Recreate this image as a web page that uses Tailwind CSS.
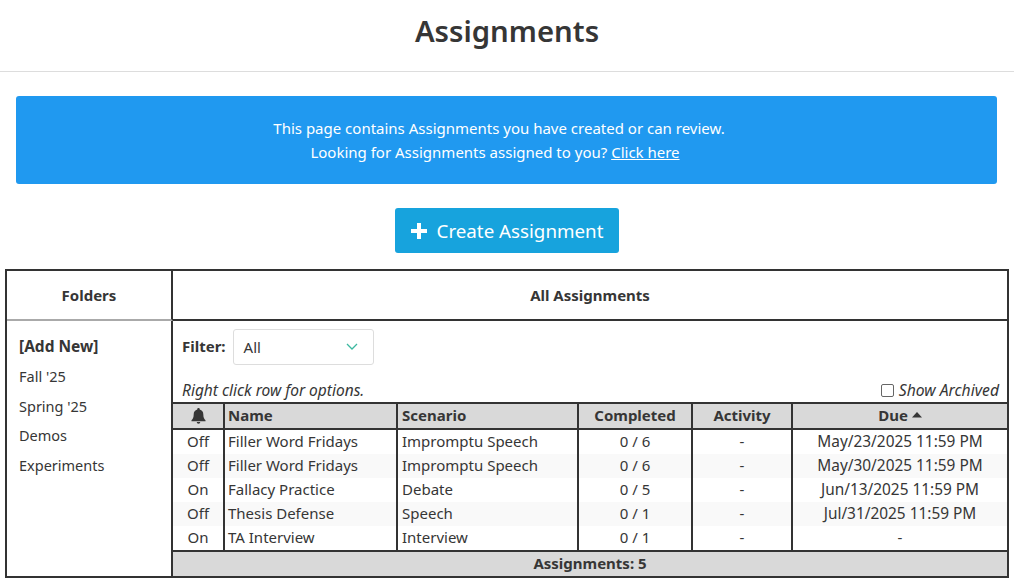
<!DOCTYPE html>
<html><head><script src="https://cdn.jsdelivr.net/npm/@tailwindcss/browser@4"></script></head>
<body class="bg-white text-[#363636] font-['Noto_Sans','Open_Sans',sans-serif] overflow-hidden">
<div class="w-[1014px] h-[582px] overflow-hidden">
<header class="h-[72px] border-b border-[#dddddd] flex items-center justify-center pb-[8px]"><h1 class="text-[29.3px] font-semibold leading-none">Assignments</h1></header>
<div class="ml-4 mt-6 w-[981px] h-[88px] bg-[#2099f0] rounded-[3px] text-white text-[15px] leading-6 flex flex-col items-center justify-center pr-[15px]">
<p>This page contains Assignments you have created or can review.</p>
<p class="pr-[8px]">Looking for Assignments assigned to you? <span class="underline">Click here</span></p>
</div>
<div class="flex justify-center mt-6"><button class="h-[45px] w-[224px] bg-[#17a3dd] rounded-[3px] text-white text-[18.75px] flex items-center justify-center gap-[10px] pt-[1px]">
<svg class="-mt-[1px]" width="16" height="16" viewBox="0 0 16 16"><path d="M6 0h4v6h6v4h-6v6H6v-6H0V6h6z" fill="#fff"/></svg>Create Assignment</button></div>
<div class="ml-[5px] mt-4 w-[1004px] h-[309px] border-2 border-[#333] grid grid-cols-[166px_1fr] grid-rows-[50px_1fr]">
<div class="border-r-2 border-b-2 border-r-[#333] border-b-[#aaa] flex items-center justify-center font-bold text-[15px] pt-[1px]">Folders</div>
<div class="border-b-2 border-[#333] flex items-center justify-center font-bold text-[15px] pt-[1px]">All Assignments</div>
<div class="border-r-2 border-[#333] px-[12px] pt-[11px] text-[14.5px] leading-[29.8px]"><p class="font-bold text-[15.5px]">[Add New]</p><p>Fall '25</p><p>Spring '25</p><p>Demos</p><p>Experiments</p></div>
<div class="flex flex-col text-[15px] leading-[24px]">
<div class="flex items-center h-[52px] px-[9px] gap-[7px]"><b class="mb-[2px]">Filter:</b><div class="w-[141px] h-[36px] border border-[#ddd] rounded-[3px] flex items-center justify-between pl-[10px] pr-[15px]"><span>All</span><svg width="12" height="8" viewBox="0 0 12 8"><path d="M1 1l5 5 5-5" fill="none" stroke="#3cb8a0" stroke-width="1.3"/></svg></div></div>
<div class="flex justify-between italic text-[15.5px] h-[29px] items-center pl-[9px] pr-[8px] pt-[5px]"><span>Right click row for options.</span><label class="flex items-center gap-[5px] text-[15.7px]"><span class="inline-block w-[13px] h-[13px] border border-[#666] rounded-[2px]"></span>Show Archived</label></div>
<table class="w-[834px] table-fixed border-collapse text-center leading-[22px]">
<colgroup><col class="w-[51px]"><col class="w-[173px]"><col class="w-[181px]"><col class="w-[114px]"><col class="w-[100px]"><col></colgroup>
<thead class="bg-[#d9d9d9] font-bold [&_th]:pb-[2px]"><tr class="h-[26px] border-y-2 border-[#333]">
<th class="border-r-2 border-[#333]"><svg class="inline-block align-[-3px]" width="15" height="16" viewBox="0 0 15 16"><path d="M7.500 0a1.200 1.200 0 0 1 1.200 1.400C11 2 12.300 3.800 12.300 6.200c0 3.300.9 4.800 2.200 6v1H.5v-1c1.300-1.200 2.200-2.700 2.200-6C2.700 3.800 4 2 6.300 1.400A1.200 1.200 0 0 1 7.500 0zM5.700 14h3.600a1.800 1.800 0 0 1-3.600 0z" fill="#363636"/></svg></th>
<th class="border-r-2 border-[#333] text-left pl-[3px]">Name</th>
<th class="border-r-2 border-[#333] text-left pl-[4px]">Scenario</th>
<th class="border-r-2 border-[#333]">Completed</th>
<th class="border-r-2 border-[#333]">Activity</th>
<th>Due <svg class="inline-block align-[3px]" width="10" height="6" viewBox="0 0 10 6"><path d="M5 0l5 5.500H0z" fill="#363636"/></svg></th>
</tr></thead>
<tbody class="leading-[23px] [&_td]:pb-[1px]">
<tr class="h-[24px]"><td class="border-r-2 border-[#333]">Off</td><td class="border-r-2 border-[#333] text-left pl-[3px]">Filler Word Fridays</td><td class="border-r-2 border-[#333] text-left pl-[4px]">Impromptu Speech</td><td class="border-r-2 border-[#333]">0 / 6</td><td class="border-r-2 border-[#333]">-</td><td class="text-[15.4px]">May/23/2025 11:59 PM</td></tr>
<tr class="h-[24px] bg-[#f9f9f9]"><td class="border-r-2 border-[#333]">Off</td><td class="border-r-2 border-[#333] text-left pl-[3px]">Filler Word Fridays</td><td class="border-r-2 border-[#333] text-left pl-[4px]">Impromptu Speech</td><td class="border-r-2 border-[#333]">0 / 6</td><td class="border-r-2 border-[#333]">-</td><td class="text-[15.4px]">May/30/2025 11:59 PM</td></tr>
<tr class="h-[24px]"><td class="border-r-2 border-[#333]">On</td><td class="border-r-2 border-[#333] text-left pl-[3px]">Fallacy Practice</td><td class="border-r-2 border-[#333] text-left pl-[4px]">Debate</td><td class="border-r-2 border-[#333]">0 / 5</td><td class="border-r-2 border-[#333]">-</td><td class="text-[15.4px]">Jun/13/2025 11:59 PM</td></tr>
<tr class="h-[24px] bg-[#f9f9f9]"><td class="border-r-2 border-[#333]">Off</td><td class="border-r-2 border-[#333] text-left pl-[3px]">Thesis Defense</td><td class="border-r-2 border-[#333] text-left pl-[4px]">Speech</td><td class="border-r-2 border-[#333]">0 / 1</td><td class="border-r-2 border-[#333]">-</td><td class="text-[15.4px]">Jul/31/2025 11:59 PM</td></tr>
<tr class="h-[24px]"><td class="border-r-2 border-[#333]">On</td><td class="border-r-2 border-[#333] text-left pl-[3px]">TA Interview</td><td class="border-r-2 border-[#333] text-left pl-[4px]">Interview</td><td class="border-r-2 border-[#333]">0 / 1</td><td class="border-r-2 border-[#333]">-</td><td>-</td></tr>
</tbody>
<tfoot><tr class="h-[25px] bg-[#d9d9d9] border-t-2 border-[#333] font-bold"><td colspan="6" class="pb-[2px]">Assignments: 5</td></tr></tfoot>
</table>
</div>
</div>
</div>
</body></html>
